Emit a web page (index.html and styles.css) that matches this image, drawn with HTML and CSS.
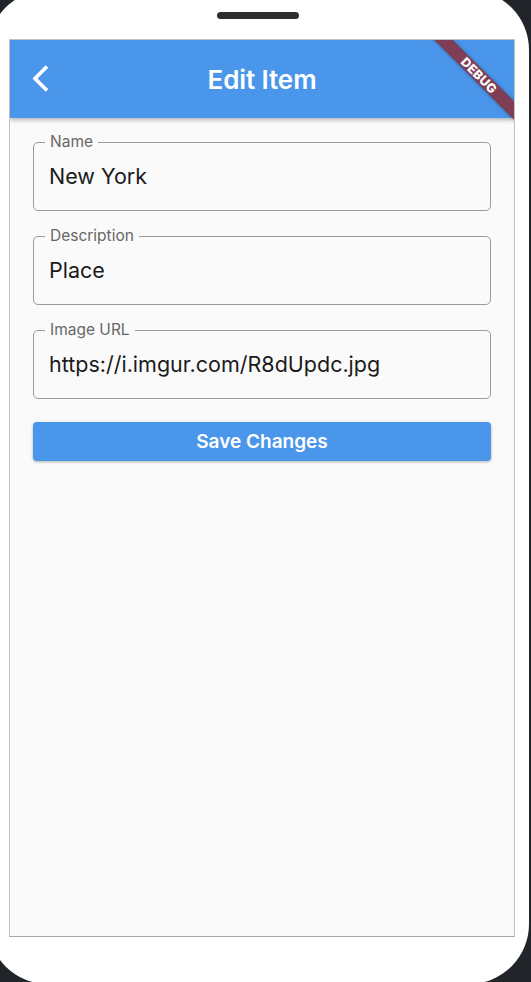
FILE: index.html
```html
<!DOCTYPE html>
<html>
<head>
<meta charset="utf-8">
<link rel="stylesheet" href="styles.css">
</head>
<body>
<div class="phone">
  <div class="notch"></div>
  <div class="screen">
    <header class="appbar">
      <svg class="back" width="20" height="30" viewBox="0 0 20 30"><path d="M16 2.5 L4 14.5 L16 26.5" fill="none" stroke="#fff" stroke-width="3.6" stroke-linejoin="miter"/></svg>
      <h1 class="title">Edit Item</h1>
      <span class="spacer"></span>
    </header>
    <div class="banner"><div class="ribbon">DEBUG</div></div>
    <main class="content">
      <div class="field"><span class="label">Name</span><span class="value">New York</span></div>
      <div class="field"><span class="label">Description</span><span class="value">Place</span></div>
      <div class="field"><span class="label">Image URL</span><span class="value">https://i.imgur.com/R8dUpdc.jpg</span></div>
      <button class="save">Save Changes</button>
    </main>
  </div>
</div>
</body>
</html>
```
FILE: styles.css
```css
html, body {
  margin: 0;
  padding: 0;
}
body {
  background: #212429;
  height: 982px;
  overflow: hidden;
  font-family: Inter, "Noto Sans", sans-serif;
}
.phone {
  width: 541px;
  height: 994px;
  margin: -10px 0 0 -12px;
  background: #ffffff;
  border-radius: 60px;
  padding: 22px 0 0 21px;
  box-sizing: border-box;
  display: flex;
  flex-direction: column;
  align-items: flex-start;
}
.notch {
  width: 82px;
  height: 7px;
  border-radius: 4px;
  background: #2e2e2e;
  margin-left: 208px;
}
.screen {
  position: relative;
  margin-top: 20px;
  width: 506px;
  height: 898px;
  box-sizing: border-box;
  border: 1px solid #c2c2c2;
  border-bottom-color: #a8a8a8;
  background: #fafafa;
  overflow: hidden;
}
.appbar {
  height: 78px;
  background: #4a96eb;
  box-shadow: 0 2px 4px rgba(0, 0, 0, 0.28);
  display: grid;
  grid-template-columns: 1fr auto 1fr;
  align-items: center;
  position: relative;
  z-index: 1;
}
.back {
  display: block;
  margin-left: 21px;
}
.title {
  margin: 0;
  color: #ffffff;
  font-size: 26px;
  font-weight: 600;
  letter-spacing: -0.1px;
}
.banner {
  position: absolute;
  top: 0;
  right: 0;
  width: 100px;
  height: 100px;
  overflow: hidden;
  z-index: 2;
}
.ribbon {
  position: absolute;
  left: 5px;
  top: 28.5px;
  width: 120px;
  height: 13px;
  line-height: 13px;
  transform: rotate(45deg);
  background: #7f3e56;
  box-shadow: 0 0 4px rgba(0, 0, 0, 0.35);
  color: #ffffff;
  font-size: 12.5px;
  font-weight: 800;
  text-align: center;
  letter-spacing: 0.3px;
}
.content {
  padding: 24px 23px;
  display: flex;
  flex-direction: column;
}
.field {
  position: relative;
  height: 69px;
  box-sizing: border-box;
  border: 1.2px solid #9b9b9b;
  border-radius: 5px;
  padding-left: 15px;
  display: flex;
  align-items: center;
  margin-bottom: 25px;
}
.label {
  position: absolute;
  top: -11px;
  left: 11px;
  padding: 0 5px;
  background: #fafafa;
  color: #676767;
  font-size: 15.5px;
  line-height: 20px;
}
.value {
  color: #1b1b1b;
  font-size: 21.5px;
  padding-bottom: 2px;
}
.save {
  margin-top: -2px;
  height: 39px;
  border: none;
  border-radius: 4px;
  background: #4a96eb;
  color: #ffffff;
  font-family: Inter, "Noto Sans", sans-serif;
  font-size: 19px;
  font-weight: 600;
  box-shadow: 0 1px 3px rgba(0, 0, 0, 0.3);
  padding: 0;
}
```
